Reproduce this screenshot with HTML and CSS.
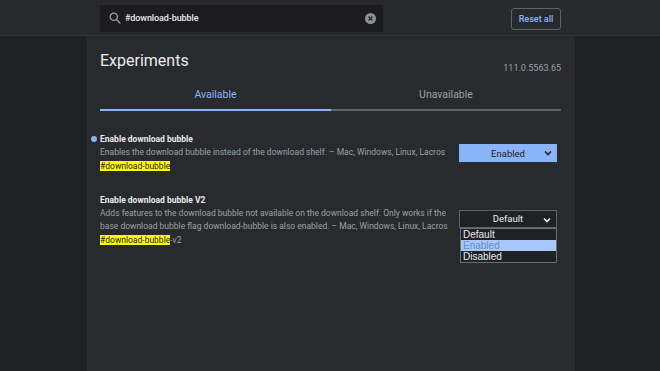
FILE: index.html
```html
<!DOCTYPE html>
<html>
<head>
<meta charset="utf-8">
<link rel="stylesheet" href="styles.css">
</head>
<body>
<header class="topbar">
  <div class="search">
    <svg class="search-icon" width="12" height="12" viewBox="0 0 12 12"><circle cx="4.8" cy="4.8" r="3.6" fill="none" stroke="#9aa0a6" stroke-width="1.3"/><line x1="7.5" y1="7.5" x2="11" y2="11" stroke="#9aa0a6" stroke-width="1.4" stroke-linecap="round"/></svg>
    <span class="search-text">#download-bubble</span>
    <svg class="clear-icon" width="11" height="11" viewBox="0 0 11 11"><circle cx="5.5" cy="5.5" r="5.5" fill="#8e9297"/><path d="M3.6 3.6 L7.4 7.4 M7.4 3.6 L3.6 7.4" stroke="#2a2b2e" stroke-width="1.4"/></svg>
  </div>
  <button class="reset">Reset all</button>
</header>
<main class="page">
  <div class="title-row">
    <h1 class="title">Experiments</h1>
    <span class="version">111.0.5563.65</span>
  </div>
  <div class="tabs">
    <div class="tab active">Available</div>
    <div class="tab">Unavailable</div>
  </div>
  <section class="flag first">
    <div class="flag-text">
      <h2 class="flag-name"><span class="dot"></span>Enable download bubble</h2>
      <p class="flag-desc">Enables the download bubble instead of the download shelf. – Mac, Windows, Linux, Lacros</p>
      <p class="flag-hash"><mark>#download-bubble</mark></p>
    </div>
    <div class="select enabled">Enabled<svg class="chev" width="8" height="6" viewBox="0 0 8 6"><path d="M1 1.5 L4 4.5 L7 1.5" fill="none" stroke="#202124" stroke-width="1.6"/></svg></div>
  </section>
  <section class="flag">
    <div class="flag-text">
      <h2 class="flag-name">Enable download bubble V2</h2>
      <p class="flag-desc">Adds features to the download bubble not available on the download shelf. Only works if the base download bubble flag download-bubble is also enabled. – Mac, Windows, Linux, Lacros</p>
      <p class="flag-hash"><mark>#download-bubble</mark>-v2</p>
    </div>
    <div class="select-wrap">
      <div class="select default">Default<svg class="chev" width="8" height="6" viewBox="0 0 8 6"><path d="M1 1.5 L4 4.5 L7 1.5" fill="none" stroke="#e8eaed" stroke-width="1.6"/></svg></div>
      <ul class="options">
        <li>Default</li>
        <li class="hl">Enabled</li>
        <li>Disabled</li>
      </ul>
    </div>
  </section>
</main>
</body>
</html>
```
FILE: styles.css
```css
html, body { margin: 0; padding: 0; }
body {
  background: #202124;
  font-family: Roboto, "Liberation Sans", sans-serif;
  color: #e8eaed;
  width: 660px;
  height: 371px;
  overflow: hidden;
}
.topbar {
  height: 36px;
  background: #28292c;
  border-bottom: 1px solid #313236;
  display: flex;
  align-items: center;
  padding-left: 100px;
  box-sizing: border-box;
}
.search {
  width: 283px;
  height: 27px;
  margin-top: 1px;
  background: #1c1c1e;
  display: flex;
  align-items: center;
  box-sizing: border-box;
  padding: 0 7px 0 9px;
}
.search-icon { flex: none; }
.search-text {
  margin-left: 4px;
  font-size: 9px;
  font-weight: 500;
  letter-spacing: -0.1px;
  color: #e8eaed;
  flex: 1;
}
.clear-icon { flex: none; }
.reset {
  margin-left: auto;
  margin-right: 99px;
  width: 50px;
  height: 22px;
  margin-top: 2px;
  background: transparent;
  border: 1px solid #5f6368;
  border-radius: 3px;
  color: #8ab4f8;
  font-family: inherit;
  font-size: 9px;
  font-weight: 500;
  padding: 0;
}
.page {
  width: 488px;
  margin-left: 87px;
  height: 335px;
  background: #292a2d;
  box-sizing: border-box;
  padding: 15px 14px 0 13px;
}
.title-row {
  display: flex;
  justify-content: space-between;
  align-items: baseline;
}
.title {
  margin: 0;
  font-size: 16px;
  font-weight: 400;
  color: #e8eaed;
  line-height: 20px;
}
.version {
  font-size: 9px;
  color: #9aa0a6;
  position: relative;
  top: 5px;
}
.tabs {
  display: grid;
  grid-template-columns: 231px 1fr;
  margin-top: 17px;
}
.tab {
  text-align: center;
  font-size: 10.5px;
  color: #9aa0a6;
  padding-bottom: 8px;
  border-bottom: 2px solid #5f6368;
  line-height: 13px;
}
.tab.active {
  color: #8ab4f8;
  border-bottom-color: #8ab4f8;
}
.flag {
  display: flex;
  justify-content: space-between;
  align-items: flex-start;
  padding-right: 4px;
}
.flag.first { margin-top: 22px; }
.flag + .flag { margin-top: 21px; }
.flag-text { width: 352px; }
.flag-name {
  margin: 0;
  font-size: 8.5px;
  font-weight: 700;
  color: #e8eaed;
  line-height: 12px;
  position: relative;
}
.dot {
  position: absolute;
  left: -9px;
  top: 3px;
  width: 6px;
  height: 6px;
  border-radius: 50%;
  background: #8ab4f8;
}
.flag-desc {
  margin: 1px 0 0;
  font-size: 8.5px;
  color: #9aa0a6;
  line-height: 13.5px;
}
.flag-hash {
  margin: 0;
  font-size: 8.5px;
  color: #9aa0a6;
  line-height: 13px;
}
mark {
  background: #ffff00;
  color: #202124;
}
.select {
  width: 98px;
  height: 18px;
  box-sizing: border-box;
  display: flex;
  align-items: center;
  justify-content: center;
  font-size: 9.5px;
  position: relative;
}
.select .chev { position: absolute; right: 5px; top: 6px; }
.select.enabled {
  margin-top: 11px;
  background: #8ab4f8;
  color: #202124;
}
.select-wrap {
  margin-top: 16px;
  position: relative;
}
.select.default {
  background: #202124;
  border: 1px solid #5f6368;
  color: #e8eaed;
}
.options {
  position: absolute;
  left: 1px;
  top: 18px;
  width: 97px;
  margin: 0;
  padding: 0;
  list-style: none;
  background: #202124;
  border: 1px solid #6b6e72;
  box-sizing: border-box;
  font-family: "Liberation Sans", Arial, sans-serif;
  font-size: 10px;
  color: #e8eaed;
}
.options li {
  height: 11px;
  line-height: 11px;
  padding-left: 2px;
}
.options li.hl {
  background: #a8c7fa;
  color: #6a8cc4;
}
```
